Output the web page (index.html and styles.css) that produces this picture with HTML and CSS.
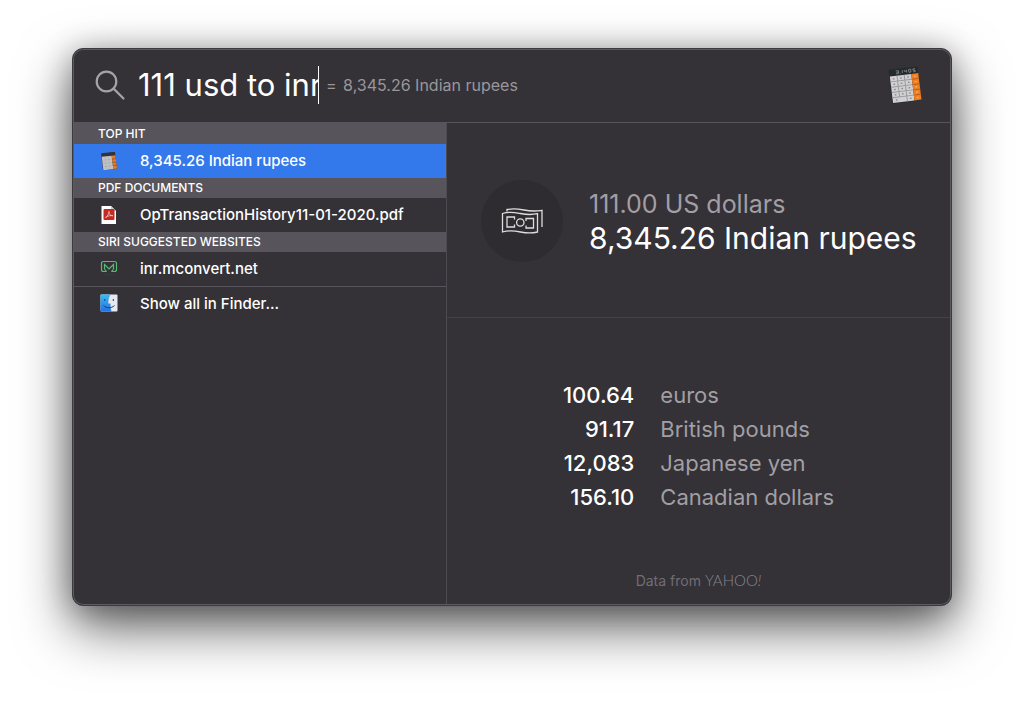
FILE: index.html
```html
<!DOCTYPE html>
<html lang="en">
<head>
<meta charset="utf-8">
<meta name="viewport" content="width=device-width, initial-scale=1">
<title>Spotlight</title>
<link rel="stylesheet" href="styles.css">
</head>
<body>
<main class="panel">
  <header class="search">
    <svg class="search-icon" viewBox="0 0 32 32" aria-hidden="true"><circle cx="12.5" cy="12.5" r="9.8"/><path d="M19.6 19.6 29.5 29.5"/></svg>
    <input class="query" type="text" value="111 usd to inr" aria-label="Search" spellcheck="false">
    <span class="caret"></span>
    <output class="inline-answer">= <span class="inline-value">8,345.26 Indian rupees</span></output>
    <svg class="app-icon" viewBox="0 0 40 40" aria-hidden="true">
      <g transform="rotate(-7 20 20) translate(-1.600 .6) scale(1.080 .97)">
        <rect x="6.500" y="2.500" width="27" height="35" rx="1" fill="#24292d"/>
        <rect x="7" y="9.500" width="20" height="27.500" fill="#d0cfd1"/>
        <rect x="27" y="9.500" width="6.500" height="27.500" fill="#ef7f22"/>
        <path d="M7 15H27M7 20.500H27M7 26H27M7 31.500H27M13.700 9.500V31.500M20.400 9.500V37" stroke="#98979b" stroke-width=".9" fill="none"/>
        <path d="M27 15h6.500M27 20.500h6.500M27 26h6.500M27 31.500h6.500" stroke="#b85c18" stroke-width=".9"/>
        <path d="M9.500 12.300h1.500M16.300 12.300h1.500M23 12.300h1.500M9.500 17.800h1.500M16.300 17.800h1.500M23 17.800h1.500M9.500 23.300h1.500M16.300 23.300h1.500M23 23.300h1.500M9.500 28.800h1.500M16.300 28.800h1.500M23 28.800h1.500M10 34.300h1.500M23 34.300h1.500" stroke="#858488" stroke-width="1.300"/>
        <path d="M29.500 12.300h1.500M29.500 17.800h1.500M29.500 23.300h1.500M29.500 28.800h1.500M29.500 34.300h1.500" stroke="#ffc08a" stroke-width="1"/>
        <path d="M13 4.500h2.500v3H13M15.500 6h-2M17 7.500h.5M19 4.500v3M21 4.500V6h2M23 4.500v3M25 4.500h2v3h-2zM31 4.500h-2V6h2v1.500h-2" stroke="#8b9194" stroke-width=".7" fill="none"/>
      </g>
    </svg>
  </header>
  <div class="content">
    <nav class="results" aria-label="Results">
      <h2 class="group">TOP HIT</h2>
      <a class="row selected" href="#top">
        <svg class="row-icon" viewBox="0 0 18 18" aria-hidden="true"><g transform="rotate(-7 9 9)"><rect x="2" y=".5" width="14" height="17" rx=".5" fill="#30333a"/><path d="M2.300 4h10v13.500h-10z" fill="#c3c3c5"/><path d="M12.300 4H16v13.500h-3.700z" fill="#df7d34"/><path d="M2.300 7.500h10M2.300 10.800h10M2.300 14h10M5.500 4v13M9 4v13" stroke="#a3a3a8" stroke-width=".4"/><path d="M12.300 7.500H16M12.300 10.800H16M12.300 14H16" stroke="#884a29" stroke-width=".7"/></g></svg>
        <span>8,345.26 Indian rupees</span>
      </a>
      <h2 class="group">PDF DOCUMENTS</h2>
      <a class="row" href="#pdf">
        <svg class="row-icon" viewBox="0 0 18 18" aria-hidden="true"><path d="M1.500 0H11l5 5v13H1.500z" fill="#fff"/><path d="M11 0v5h5z" fill="#c9c9cc"/><rect x="3.500" y="3" width="11" height="11" rx="1" fill="#c52b24"/><path d="M5.500 11.500c2-1 3.500-4 3.500-6 0 3 1.800 4.500 4 4.200-2.500-.5-5 .2-7.500 1.800z" fill="none" stroke="#f3c9c6" stroke-width=".8"/></svg>
        <span>OpTransactionHistory11-01-2020.pdf</span>
      </a>
      <h2 class="group">SIRI SUGGESTED WEBSITES</h2>
      <a class="row" href="#web">
        <svg class="row-icon" viewBox="0 0 18 18" aria-hidden="true"><path d="M6.500 11.500H3.500q-2 0-2-2v-6q0-2 2-2h11q2 0 2 2v6q0 2-2 2h-3" fill="none" stroke="#56bd70" stroke-width="1.200"/><path d="M4.500 9V4.500L9 9l4.500-4.500V9M6.500 11.500 4.500 9M11.500 11.500l2-2.500" fill="none" stroke="#56bd70" stroke-width="1.200"/><path d="M2 14.800h14" stroke="#2c4536" stroke-width=".8"/></svg>
        <span>inr.mconvert.net</span>
      </a>
      <a class="row finder" href="#finder">
        <svg class="row-icon" viewBox="0 0 18 18" aria-hidden="true"><defs><linearGradient id="face" x2="0" y2="1"><stop stop-color="#36bdf8"/><stop offset="1" stop-color="#2271e8"/></linearGradient></defs><rect x=".5" y=".5" width="17" height="17" rx="1" fill="#e5eaf1"/><path d="M1.500.5h8.500C8.300 4 8 7 8 9.800h2.300c0 3 .3 5.700 1 7.700H1.500q-1 0-1-1v-15q0-1 1-1z" fill="url(#face)"/><path d="M10 .5C8.300 4 8 7 8 9.800h2.300c0 3 .3 5.700 1 7.700" fill="none" stroke="#5d83b0" stroke-width=".5"/><path d="M4.800 5v2M13.300 5v2M3.500 11.500c3 3 8 3 11 0" fill="none" stroke="#213d65" stroke-width="1"/></svg>
        <span>Show all in Finder...</span>
      </a>
    </nav>
    <section class="detail">
      <div class="conversion">
        <div class="badge">
          <svg class="money" viewBox="0 0 44 28" aria-hidden="true"><path d="M2.500 6.500c7-2.500 13-1 18 0s11 1.500 17 .2V25c-6 1.500-12 1-17 0s-11-2-18 0zM7 4.500V2.500c7-1.500 12-.500 17 .500s11 1.500 18 .300V20"/><path d="M14.500 12.500V10H7v10h7.500V17.500M26 14v-2.500h7.500V21H26V18.500"/><circle cx="20.300" cy="15.500" r="3.700"/></svg>
        </div>
        <div>
          <p class="from">111.00 US dollars</p>
          <p class="to">8,345.26 Indian rupees</p>
        </div>
      </div>
      <div class="others">
        <table class="rates">
          <tr><td class="amount">100.64</td><th scope="row">euros</th></tr>
          <tr><td class="amount">91.17</td><th scope="row">British pounds</th></tr>
          <tr><td class="amount">12,083</td><th scope="row">Japanese yen</th></tr>
          <tr><td class="amount">156.10</td><th scope="row">Canadian dollars</th></tr>
        </table>
        <p class="source">Data from <span class="yahoo">YAHOO<i>!</i></span></p>
      </div>
    </section>
  </div>
</main>
</body>
</html>
```
FILE: styles.css
```css
* { box-sizing: border-box; }

body {
  margin: 0;
  min-height: 100vh;
  padding: 48px 72px 95px;
  display: flex;
  background: #fff;
  color: #fff;
  font-family: Inter, "Liberation Sans", sans-serif;
}

h2, p { margin: 0; }

.panel {
  flex: 1;
  display: flex;
  flex-direction: column;
  overflow: hidden;
  border: 1px solid #3b3a3e;
  border-radius: 11px;
  background: #343137;
  box-shadow: inset 0 0 0 1px #5c5a60, 0 22px 54px rgba(0, 0, 0, .6), 0 4px 30px rgba(0, 0, 0, .3);
}

.search {
  display: flex;
  align-items: center;
  height: 74px;
  padding: 0 26px 1px 21px;
  border-bottom: 1px solid #57555b;
}

.search-icon {
  width: 32px;
  height: 32px;
  fill: none;
  stroke: #a5a2a8;
  stroke-width: 2.2;
  stroke-linecap: round;
}

.query {
  width: 180px;
  margin-left: 12px;
  padding: 0;
  border: 0;
  outline: 0;
  background: none;
  color: #fff;
  font: 400 31px/40px Inter, "Liberation Sans", sans-serif;
}

.caret {
  width: 1px;
  height: 38px;
  background: #fff;
}

.inline-answer {
  flex: 1;
  margin-left: 7px;
  color: #99979c;
  font-size: 16px;
  line-height: 24px;
  white-space: nowrap;
}

.inline-value { margin-left: 2px; }

.app-icon {
  width: 40px;
  height: 40px;
}

.content {
  flex: 1;
  display: grid;
  grid-template-columns: 373px 1fr;
  margin: 0 1px 1px;
}

.results {
  border-top: 1px solid #57555b;
  border-right: 1px solid #4d4b51;
}

.group {
  padding-left: 24px;
  background: #57555b;
  font-size: 12px;
  line-height: 20px;
  font-weight: 500;
}

.row {
  display: flex;
  align-items: center;
  gap: 22px;
  height: 34px;
  padding: 0 0 1px 26px;
  color: #fff;
  font-size: 15px;
  font-weight: 500;
  text-decoration: none;
}

.row-icon {
  width: 18px;
  height: 18px;
}

.selected { background: #3379ec; }

.finder { border-top: 1px solid #57555b; }

.detail {
  display: flex;
  flex-direction: column;
}

.conversion {
  display: flex;
  align-items: center;
  gap: 26px;
  height: 195px;
  padding: 1px 0 0 34px;
  border-bottom: 1px solid #434046;
}

.badge {
  display: flex;
  align-items: center;
  justify-content: center;
  width: 82px;
  height: 82px;
  border-radius: 50%;
  background: #2e2c30;
}

.money {
  width: 44px;
  height: 28px;
  fill: none;
  stroke: #deddde;
  stroke-width: 1.3;
}

.from {
  color: #a19fa4;
  font-size: 25px;
  line-height: 34px;
}

.to {
  font-size: 30px;
  line-height: 34px;
  white-space: nowrap;
}

.others {
  flex: 1;
  display: flex;
  flex-direction: column;
  align-items: center;
  justify-content: space-between;
  padding: 60px 0 13px;
}

.rates {
  border-collapse: collapse;
  font-size: 22px;
  line-height: 34px;
}

.rates td, .rates th { padding: 0; }

.rates .amount {
  padding-right: 26px;
  font-weight: 500;
  text-align: right;
}

.rates th {
  color: #a19fa4;
  font-weight: 400;
  text-align: left;
}

.source {
  color: #706d74;
  font-size: 14px;
  line-height: 20px;
}

.yahoo {
  color: #87848b;
  font-family: Lato, sans-serif;
  font-weight: 300;
  font-size: 15px;
}
```
